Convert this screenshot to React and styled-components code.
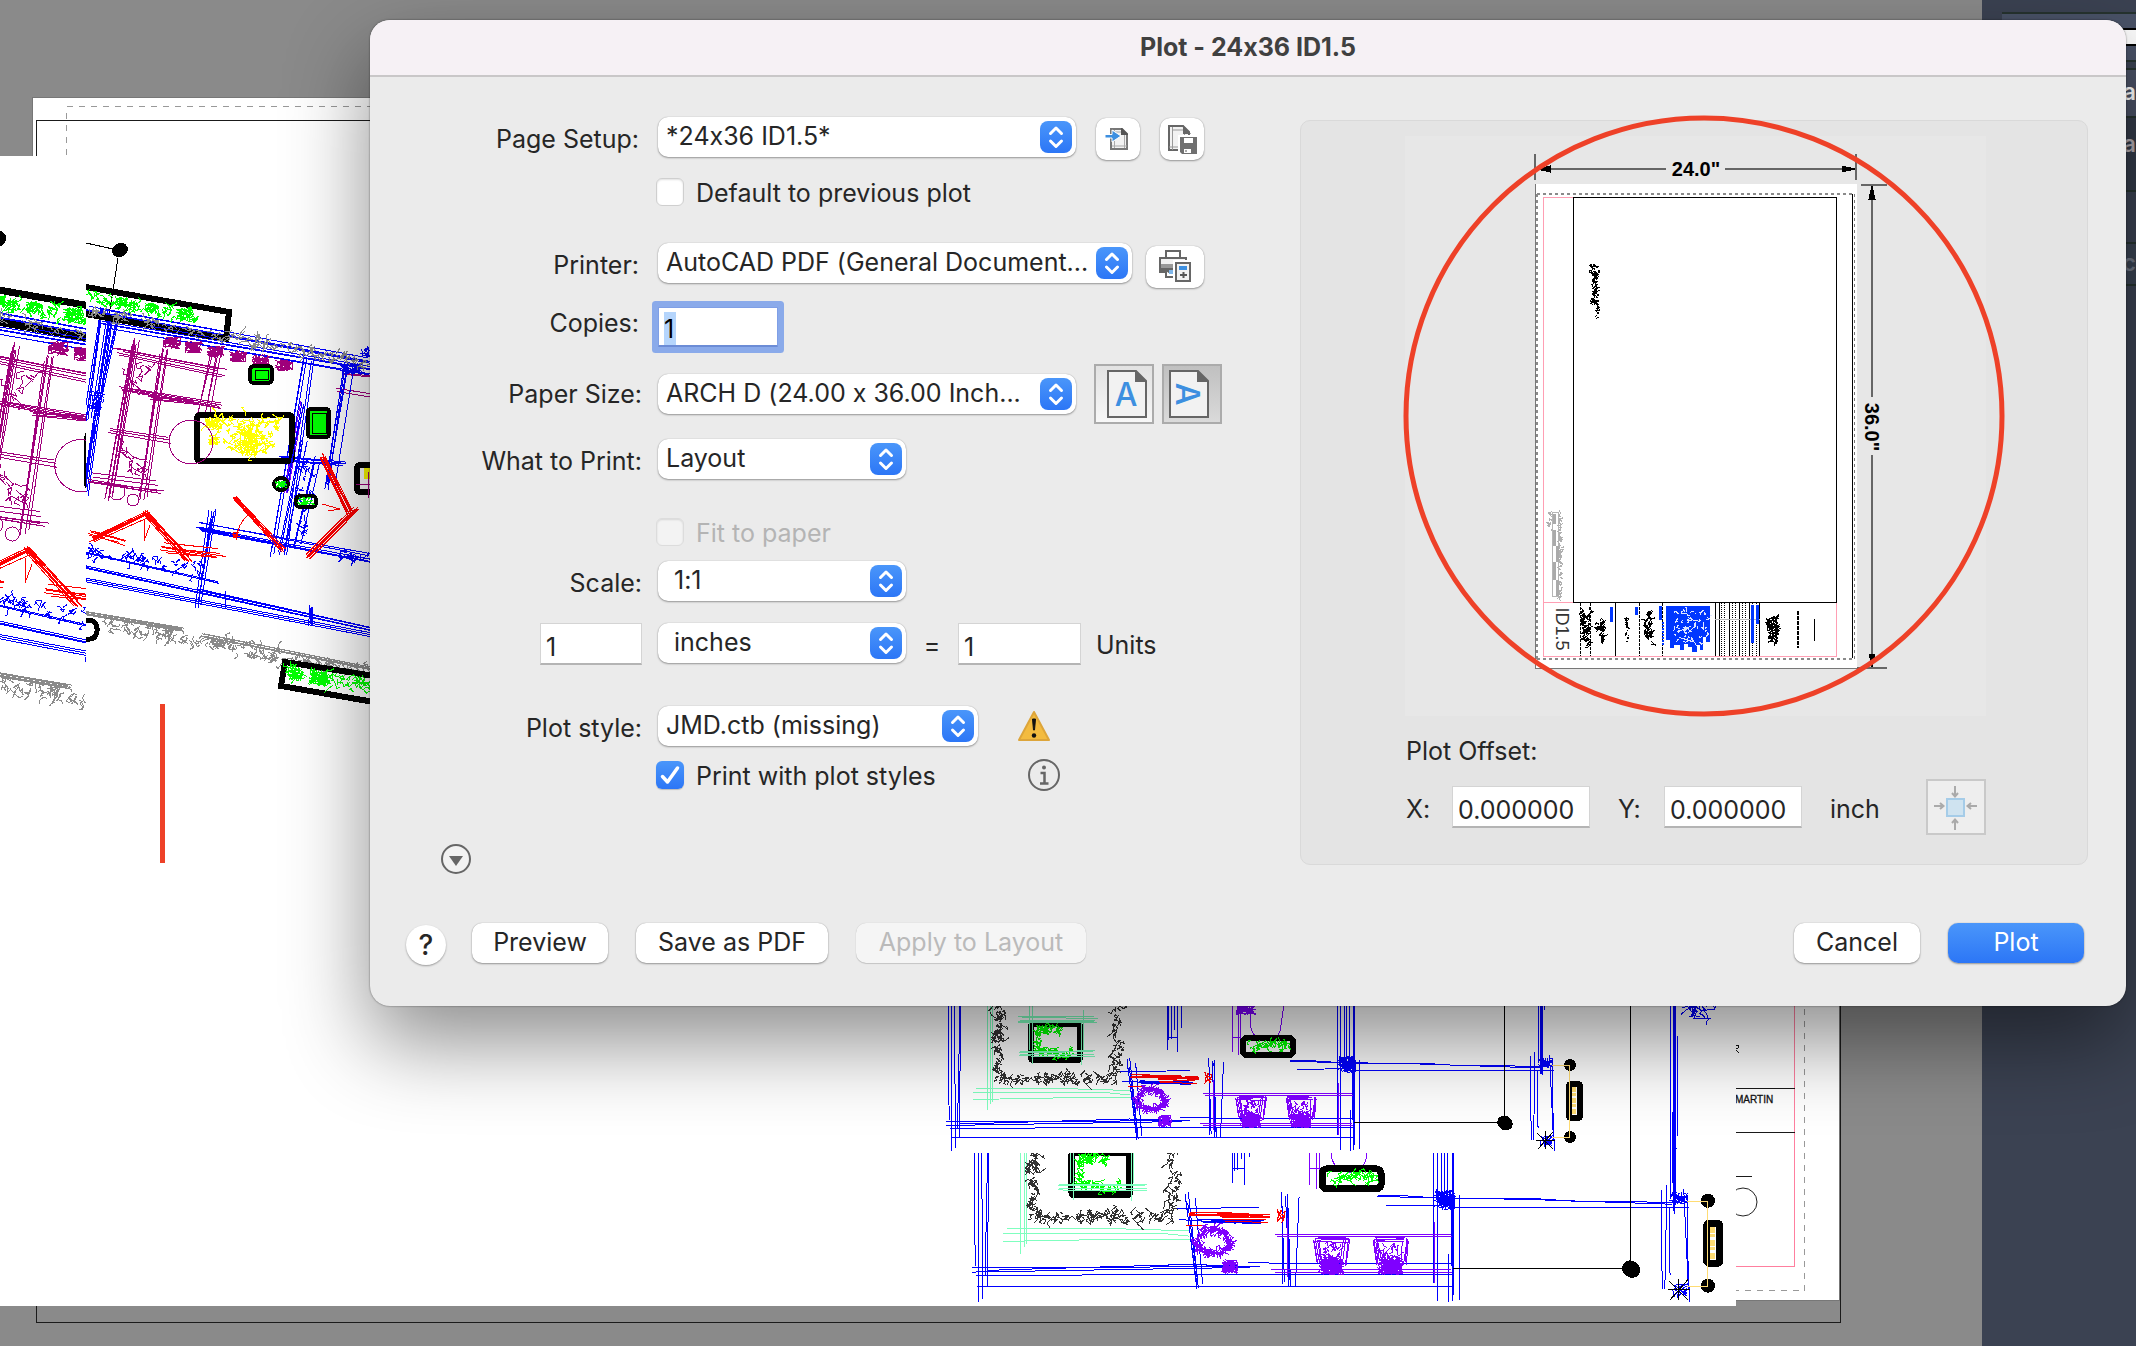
import React, { useState } from 'react';
import styled, { createGlobalStyle, css } from 'styled-components';

const GlobalStyle = createGlobalStyle`
  * { box-sizing: border-box; }
  body {
    margin: 0;
    background: #8a8a8a;
    color: #262626;
    font-family: Inter, "Liberation Sans", sans-serif;
    font-feature-settings: "calt" 0;
    font-size: 25px;
    line-height: 30px;
    overflow: hidden;
  }
  button, input, select { font: inherit; font-feature-settings: "calt" 0; color: inherit; }
`;

/* ---------- pen strokes for the floor plan ---------- */

let seed = 7;
const rnd = () => {
  seed = (seed * 16807) % 2147483647;
  return seed / 2147483647;
};
const spread = (n) => (rnd() - 0.5) * 2 * n;

// several nearly parallel strokes between two points
const bundle = (x1, y1, x2, y2, count, wobble) => {
  const len = Math.hypot(x2 - x1, y2 - y1) || 1;
  const nx = -(y2 - y1) / len;
  const ny = (x2 - x1) / len;
  const ux = (x2 - x1) / len;
  const uy = (y2 - y1) / len;
  let d = '';
  for (let i = 0; i < count; i++) {
    const a = spread(wobble);
    const b = a + spread(wobble * 0.4);
    const s = spread(wobble);
    const e = spread(wobble);
    d += `M${(x1 + nx * a + ux * s).toFixed(1)} ${(y1 + ny * a + uy * s).toFixed(1)}`;
    d += `L${(x2 + nx * b + ux * e).toFixed(1)} ${(y2 + ny * b + uy * e).toFixed(1)}`;
  }
  return d;
};

// short squiggles inside a band that runs from one point to the other
const squiggle = (x1, y1, x2, y2, depth, count, size) => {
  const upright = Math.abs(y2 - y1) > Math.abs(x2 - x1);
  let d = '';
  for (let i = 0; i < count; i++) {
    const t = rnd();
    const x = x1 + (x2 - x1) * t + spread(depth) * (upright ? 1 : 0.2);
    const y = y1 + (y2 - y1) * t + spread(depth) * (upright ? 0.2 : 1);
    d += `M${x.toFixed(1)} ${y.toFixed(1)}`;
    for (let k = 0; k < 3; k++) {
      d += `l${spread(size).toFixed(1)} ${spread(size).toFixed(1)}`;
    }
  }
  return d;
};

// dense knot of strokes
const knot = (cx, cy, rx, ry, count) => {
  let d = '';
  for (let i = 0; i < count; i++) {
    d += `M${(cx + spread(rx)).toFixed(1)} ${(cy + spread(ry)).toFixed(1)}`;
    d += `L${(cx + spread(rx)).toFixed(1)} ${(cy + spread(ry)).toFixed(1)}`;
  }
  return d;
};

const ring = (cx, cy, rx, ry, count, size = 4) => {
  let d = '';
  for (let i = 0; i < count; i++) {
    const a = rnd() * 6.283;
    d += `M${(cx + Math.cos(a) * rx).toFixed(1)} ${(cy + Math.sin(a) * ry).toFixed(1)}`;
    for (let k = 0; k < 3; k++) d += `l${spread(size).toFixed(1)} ${spread(size).toFixed(1)}`;
  }
  return d;
};

const BLUE = '#0000ff';
const PLUM = '#a0007c';
const VIOLET = '#7f00ff';
const AQUA = '#7fffbf';
const GREEN = '#00ff00';
const AMBER = '#ffdc73';

const strokes = [
  // upper room
  { c: BLUE, d: bundle(104, 310, 88, 420, 6, 4) + bundle(112, 318, 87, 495, 6, 4) + bundle(118, 320, 92, 440, 3, 2) + knot(97, 400, 8, 10, 20) },
  { c: BLUE, d: bundle(86, 308, 370, 360, 4, 3) + bundle(100, 322, 370, 368, 3, 2) + bundle(110, 328, 370, 374, 2, 2) },
  { c: PLUM, d: bundle(136, 342, 110, 498, 7, 5) + bundle(164, 352, 142, 500, 5, 4) + bundle(217, 352, 204, 412, 5, 6) },
  { c: PLUM, d: bundle(118, 350, 222, 371, 6, 5) + bundle(120, 388, 218, 405, 5, 4) + bundle(108, 430, 170, 440, 3, 3) + bundle(92, 478, 160, 488, 7, 5) },
  { c: PLUM, d: squiggle(148, 366, 130, 380, 8, 8, 7) + squiggle(128, 450, 136, 475, 6, 14, 7) + bundle(150, 398, 195, 402, 4, 3) },
  { c: PLUM, d: [172, 194, 216, 238, 261, 284].map((x, i) => knot(x, 343 + i * 4.4, 9, 6, 46)).join('') },
  { c: PLUM, d: bundle(336, 390, 372, 396, 2, 2) + bundle(344, 374, 372, 376, 2, 2) },
  { c: BLUE, d: bundle(307, 355, 274, 555, 3, 3) + bundle(313, 360, 286, 555, 2, 2) + bundle(349, 368, 330, 490, 6, 6) + bundle(304, 442, 282, 553, 4, 3) + bundle(317, 460, 298, 545, 3, 4) },
  { c: BLUE, d: knot(352, 369, 12, 6, 24) + knot(366, 352, 6, 6, 14) + bundle(282, 458, 344, 463, 5, 4) + squiggle(308, 460, 300, 540, 6, 26, 4) },
  { c: VIOLET, d: bundle(302, 402, 286, 494, 3, 2) },
  { c: BLUE, d: bundle(200, 527, 372, 560, 7, 5) + bundle(214, 516, 200, 604, 6, 7) + squiggle(330, 552, 368, 560, 3, 14, 5) },
  { c: BLUE, d: bundle(60, 561, 372, 629, 3, 2) + bundle(86, 552, 218, 582, 3, 2) + bundle(60, 576, 372, 635, 3, 3) + bundle(200, 590, 372, 628, 4, 3) },
  { c: BLUE, d: bundle(227, 592, 227, 608, 3, 2) + bundle(311, 607, 311, 624, 4, 2) + squiggle(88, 552, 205, 572, 5, 60, 4) },
  { c: '#ff0000', d: bundle(92, 540, 148, 514, 9, 3) + bundle(146, 512, 190, 560, 9, 4) + bundle(90, 533, 122, 542, 7, 5) + bundle(165, 548, 222, 556, 6, 6) + 'M144 520V541L150 525' },
  { c: '#ff0000', d: bundle(235, 498, 283, 550, 9, 2) + bundle(322, 456, 350, 514, 9, 3) + bundle(356, 508, 308, 556, 9, 3) + 'M248 515Q236 526 237 540M322 504L340 509L328 511' + knot(236, 535, 4, 3, 10) },
  { c: '#8a8a8a', d: bundle(86, 613, 182, 630, 7, 2) + bundle(203, 635, 372, 668, 7, 2) + knot(168, 632, 6, 7, 18) + knot(219, 643, 7, 6, 18) },
  { c: '#8a8a8a', d: squiggle(104, 624, 200, 642, 5, 60, 4) + squiggle(205, 640, 285, 658, 6, 60, 4) + squiggle(290, 660, 372, 672, 4, 60, 4) },
  // lower room
  { c: BLUE, d: 'M948.5 880V1090L949.5 1120M951.5 880V1151M954.5 880V1020L955.5 1148M959.5 880V1030L957.5 1128M961.5 880L959.5 1138' },
  { c: BLUE, d: 'M946 1121.5H1060L1180 1120.5M946 1125.5L1182 1121.5M950 1128.5L1120 1127.5H1353M951 1137.5H1353M960 1124L1130 1119L1190 1121M1180 1117.5L1240 1118.5H1353' },
  { c: AQUA, d: 'M987.5 880V1110M990.5 880V1104M992.5 880V1102M976 1088.5H1060L1130 1090.5M973 1092.5L1105 1092.5L1130 1095M973 1099.5L1080 1097.5H1132' },
  { c: '#333', d: squiggle(999, 990, 999, 1080, 4, 80, 4) + squiggle(1117, 990, 1117, 1080, 4, 60, 4) + squiggle(1000, 1079, 1118, 1079, 3, 90, 4) },
  { c: BLUE, d: 'M1167.5 880V1050M1168.5 880V1040M1171.5 880V1039M1174.5 880V1030M1177.5 880V1052M1181.5 880V1028M1167 1037.5H1177' },
  { c: VIOLET, d: 'M1232.5 990V1052M1238.5 990V1055M1240.5 990V1050M1232 1037.5H1240M1249.5 1000L1251 1028Q1254 1040 1266 1041Q1280 1040 1281 1025L1284.500 1000' + knot(1246, 1008, 10, 7, 50) },
  { c: BLUE, d: 'M1337.500 880V1135M1340.500 880V1150M1344.500 880V1070M1346.500 880V1070M1349.500 880V1070M1353.500 880V1150M1354.500 880V1145M1352.500 1060V1120M1359.500 1060V1149M1350 1110V1151' + knot(1347, 1064, 9, 9, 60) },
  { c: BLUE, d: 'M1290 1060.5H1308L1353 1063.500M1290 1061.500L1420 1064L1540 1068M1350 1063H1420L1458 1065.500H1500L1545 1067M1297 1069.500L1353 1068.500M1353 1070.500H1554' },
  { c: BLUE, d: bundle(1132, 1062, 1140, 1136, 5, 5) + bundle(1211, 1060, 1213, 1136, 5, 4) + 'M1223.500 1062L1220.500 1137M1120 1072L1190 1070.500M1122 1081L1170 1084' + bundle(1140, 1082, 1192, 1083, 4, 2) },
  { c: '#ff0000', d: bundle(1132, 1076, 1180, 1077, 7, 2) + bundle(1160, 1080, 1196, 1080, 8, 3) + knot(1208, 1078, 4, 6, 18) + 'M1128 1086H1142' },
  { c: VIOLET, d: ring(1151, 1100, 13, 10, 170, 3) + knot(1165, 1121, 7, 6, 60) + 'M1203 1093.500H1352M1205 1095.500H1353M1200 1123.500H1352M1203 1125.500H1353M1213.500 1080V1130M1338.500 1083V1135' },
  { c: VIOLET, d: [1251, 1301].map((x) => knot(x, 1121, 11, 7, 110) + bundle(x - 13, 1098, x - 10, 1118, 5, 3) + bundle(x + 13, 1098, x + 11, 1118, 5, 3) + bundle(x - 13, 1098, x + 13, 1098, 4, 2) + ring(x, 1109, 7, 5, 26, 3)).join('') },
  { c: BLUE, d: 'M1538.500 820V1060M1540.500 820V1074M1541.500 820V1074M1542.500 820V1060M1543 1020L1542 1076M1540 990V1050M1544 925V1010' + knot(1545, 1063, 8, 5, 30) },
  { c: BLUE, d: 'M1530.500 1056V1100L1531.500 1140M1534.500 1052V1090L1533.500 1140M1537.500 1070V1125L1538.500 1128M1549.500 1055L1553.500 1140M1552.500 1060V1100L1554.500 1151' + knot(1546, 1141, 7, 6, 16) + ring(1565, 897, 7, 9, 36, 6) + 'M1557 911H1573' },
];

const aquaFrame = 'M1029.5 880V1050M1032.5 900V1064M1083.5 1010V1050M1081.5 1020V1065' + bundle(1020, 1020, 1096, 1020, 5, 3) + bundle(1019, 1053, 1095, 1053, 5, 3);
const wallHatch = squiggle(90, 312, 228, 338, 4, 60, 4) + squiggle(228, 335, 370, 365, 3, 90, 4);
const planterFill = squiggle(90, 298, 196, 317, 5, 90, 4) + knot(122, 302, 6, 5, 24) + knot(150, 308, 6, 5, 24) + knot(184, 314, 9, 6, 30);
const planterFill2 = squiggle(286, 671, 372, 687, 6, 80, 4) + knot(318, 678, 10, 8, 44) + knot(295, 674, 8, 7, 30);
const shrub = knot(281, 484, 6, 4, 16) + knot(306, 501, 9, 4, 20);
const deskFill = squiggle(210, 424, 280, 424, 8, 60, 5) + squiggle(230, 444, 274, 444, 8, 50, 5) + knot(212, 423, 8, 6, 40) + knot(214, 440, 6, 5, 24) + knot(250, 440, 8, 16, 50);
const smallFill = knot(1043, 1030, 7, 5, 34) + squiggle(1038, 1028, 1064, 1028, 5, 16, 4) + squiggle(1038, 1053, 1074, 1053, 4, 34, 4) + squiggle(1038, 1032, 1038, 1054, 2, 20, 3);
const smallFill2 = squiggle(1247, 1045, 1289, 1045, 4, 54, 3);
const star = 'M1545 1131V1149M1537 1133L1553 1149M1553 1132L1538 1149M1536 1140H1555';

const Drawing = styled.svg`
  position: absolute;
  top: 0;
  left: 0;
  display: block;
  shape-rendering: crispEdges;
`;

function FloorPlan() {
  return (
    <g fill="none">
      <path d="M86 243L113 249M118 258L108 322" stroke="#000" vectorEffect="non-scaling-stroke" />
      <ellipse cx="120" cy="250" rx="8" ry="7" transform="rotate(-30 120 250)" fill="#000" />
      {strokes.map((s, i) => (
        <path key={i} d={s.d} stroke={s.c} vectorEffect="non-scaling-stroke" />
      ))}
      <path d="M80 286L229 312L226 339L80 313" stroke="#000" strokeWidth="6" />
      <path d="M90 311L180 327M100 309L226 332M150 326L220 339" stroke={BLUE} vectorEffect="non-scaling-stroke" />
      <path d={wallHatch} stroke="#8a8a8a" vectorEffect="non-scaling-stroke" />
      <path d={planterFill} stroke={GREEN} />
      <rect x="197" y="415" width="95" height="46" rx="3" stroke="#000" strokeWidth="6" />
      <path d={deskFill} stroke="#ffff00" vectorEffect="non-scaling-stroke" />
      <circle cx="191" cy="442" r="22" stroke={PLUM} vectorEffect="non-scaling-stroke" />
      <circle cx="117" cy="492" r="8" stroke={PLUM} vectorEffect="non-scaling-stroke" />
      <circle cx="133" cy="500" r="6" stroke={PLUM} vectorEffect="non-scaling-stroke" />
      <path d="M302 402L287 492M304 404L285 490" stroke={BLUE} />
      <rect x="250" y="366" width="22" height="17" rx="4" fill={GREEN} stroke="#000" strokeWidth="4" />
      <rect x="255" y="370" width="13" height="9" stroke="#000" />
      <rect x="308" y="409" width="21" height="28" rx="3" fill={GREEN} stroke="#000" strokeWidth="4" />
      <rect x="312" y="413" width="14" height="20" stroke="#000" />
      <ellipse cx="281" cy="484" rx="7" ry="6" stroke="#000" strokeWidth="4" />
      <rect x="296" y="496" width="20" height="11" rx="4" stroke="#000" strokeWidth="4" />
      <path d={shrub} stroke={GREEN} />
      <rect x="357" y="465" width="40" height="27" rx="3" fill="#fff" stroke="#000" strokeWidth="6" />
      <rect x="364" y="468" width="20" height="11" fill="#ffff00" />
      <path d="M356 484H372M368 472V498" stroke={PLUM} />
      <path d="M84 620H90Q98 622 97 631Q96 639 90 639H84" stroke="#000" strokeWidth="5" />
      <path d="M374 676L285 662L281 686L374 702" stroke="#000" strokeWidth="6" />
      <path d={planterFill2} stroke={GREEN} />

      <rect x="1031" y="1024" width="49" height="36" rx="2" stroke="#000" strokeWidth="6" />
      <path d={smallFill} stroke={GREEN} vectorEffect="non-scaling-stroke" />
      <path d={aquaFrame} stroke={AQUA} vectorEffect="non-scaling-stroke" />
      <rect x="1243" y="1038" width="50" height="17" rx="4" stroke="#000" strokeWidth="6" />
      <path d={smallFill2} stroke={GREEN} vectorEffect="non-scaling-stroke" />
      <path d="M1354 1122.500H1500M1504.500 820V1118" stroke="#000" vectorEffect="non-scaling-stroke" />
      <ellipse cx="1505" cy="1123" rx="8" ry="7" transform="rotate(35 1505 1123)" fill="#000" />
      <path d={star} stroke="#000" vectorEffect="non-scaling-stroke" />
      <circle cx="1570" cy="1065" r="6" fill="#000" />
      <circle cx="1570" cy="1137" r="6" fill="#000" />
      <rect x="1566" y="1081" width="17" height="40" rx="5" fill="#000" />
      <path d="M1574 1087V1115" stroke="#fff" strokeWidth="5" />
      <path d="M1574 1087V1115" stroke={AMBER} strokeWidth="4" strokeDasharray="5 1 3 2" />
      <path d="M1552 1065.500H1569.500V1137.500H1552" stroke={AMBER} vectorEffect="non-scaling-stroke" />
    </g>
  );
}

function Sheet() {
  return (
    <Drawing width="1982" height="1346" viewBox="0 0 1982 1346" aria-hidden="true">
      <defs>
        <clipPath id="patchBack"><rect x="0" y="156" width="1736" height="1150" /></clipPath>
        <clipPath id="patchFront"><rect x="86" y="180" width="1508" height="973" /></clipPath>
      </defs>
      <rect x="32" y="97" width="1807" height="1203" fill="#fff" stroke="#777" />
      <rect x="66.500" y="106.500" width="1738" height="1184" fill="none" stroke="#999" strokeDasharray="6 6" />
      <rect x="36.500" y="120.500" width="1804" height="1202" fill="none" stroke="#1a1a1a" />
      <path d="M1700 1266.500H1794.500V900" fill="none" stroke="#ff7f9f" />
      <path d="M1700 1088.500H1795M1700 1132.500H1795M1700 1176.500H1752" stroke="#1a1a1a" />
      <circle cx="1743" cy="1202" r="14" fill="none" stroke="#222" shapeRendering="auto" />
      <text x="1735" y="1103" fontSize="10" fontFamily="Liberation Sans, sans-serif" fill="#111" stroke="#111" strokeWidth="0.300">MARTIN</text>
      <path d="M1734 1045H1738V1048L1735 1049L1739 1053" fill="none" stroke="#111" />
      <g clipPath="url(#patchBack)">
        <rect x="0" y="156" width="1736" height="1150" fill="#fff" />
        <g transform="translate(-144.700 -56) scale(1.18)"><FloorPlan /></g>
      </g>
      <g clipPath="url(#patchFront)">
        <rect x="86" y="180" width="1508" height="973" fill="#fff" />
        <FloorPlan />
      </g>
      <rect x="160" y="704" width="5" height="159" fill="#ee4128" />
    </Drawing>
  );
}

/* ---------- palette behind the dialog ---------- */

const Stage = styled.div`
  position: relative;
  min-height: 100vh;
  display: grid;
  grid-template-columns: minmax(0, 1fr) 154px;
  overflow: hidden;
`;

const Palette = styled.aside`
  grid-column: 2;
  grid-row: 1;
  min-height: 100vh;
  background: #3b4252;
  padding-top: 12px;
  padding-left: 20px;
  font-size: 23px;
  font-weight: 600;
  text-align: right;
  overflow: hidden;
`;

const PaletteLine = styled.div`
  height: ${(p) => p.$height}px;
  padding-top: ${(p) => p.$pad || 0}px;
  background: ${(p) => p.$bg || 'transparent'};
  border-top: 2px solid #26332f;
  color: ${(p) => p.$color || '#fff'};
  line-height: 30px;
`;

const PaletteSwatch = styled.div`
  height: 18px;
  margin: 14px 0 16px;
  border: 2px solid #000;
  border-right: 0;
  background: #fff;
`;

/* ---------- dialog ---------- */

const Dialog = styled.section`
  grid-column: 1 / -1;
  grid-row: 1;
  position: relative;
  align-self: start;
  margin: 20px 10px 0 370px;
  border-radius: 20px;
  background: #ebebeb;
  box-shadow: 0 0 2px rgba(0, 0, 0, 0.55), 0 36px 84px rgba(0, 0, 0, 0.45);
`;

const TitleBar = styled.h1`
  margin: 0;
  height: 57px;
  padding-top: 12px;
  border-radius: 20px 20px 0 0;
  border-bottom: 2px solid #c9c7c8;
  background: #f6f1f5;
  font-size: 25px;
  font-weight: 700;
  line-height: 30px;
  text-align: center;
  color: #404040;
`;

const Body = styled.div`
  display: flex;
  align-items: flex-start;
  padding: 40px 38px 0 0;
`;

const Form = styled.form`
  width: 930px;
  flex: none;
`;

const Row = styled.div`
  display: grid;
  grid-template-columns: 272px minmax(0, 1fr);
  column-gap: 16px;
  min-height: ${(p) => p.$height || 44}px;
  margin-top: ${(p) => p.$top || 0}px;
  align-items: ${(p) => (p.$center ? 'center' : 'start')};
`;

const Controls = styled.div`
  grid-column: 2;
  display: flex;
  align-items: ${(p) => (p.$center ? 'center' : 'flex-start')};
`;

const Label = styled.label`
  justify-self: end;
  line-height: 44px;
  padding-right: ${(p) => (p.$inset ? 3 : 0)}px;
  white-space: nowrap;
`;

const SelectWrap = styled.span`
  position: relative;
  display: block;
  flex: none;
  width: ${(p) => p.$width}px;
  height: 40px;
`;

const StyledSelect = styled.select`
  appearance: none;
  width: 100%;
  height: 40px;
  padding: 0 40px 2px ${(p) => (p.$indent ? 16 : 8)}px;
  border: 0;
  border-radius: 10px;
  background: #fff;
  box-shadow: 0 1px 2px rgba(0, 0, 0, 0.35), 0 0 1px rgba(0, 0, 0, 0.3);
  outline: none;
`;

const Knob = styled.svg`
  position: absolute;
  top: 4px;
  right: 4px;
  width: 32px;
  height: 32px;
  border-radius: 8px;
  background: linear-gradient(#4a96fa, #2c76f6);
  pointer-events: none;
`;

function Select({ id, width, value, indent, label }) {
  return (
    <SelectWrap $width={width}>
      <StyledSelect id={id} defaultValue={value} $indent={indent} aria-label={label}>
        <option>{value}</option>
      </StyledSelect>
      <Knob viewBox="0 0 32 32" fill="none" stroke="#fff" strokeWidth="3" strokeLinecap="round" strokeLinejoin="round">
        <path d="M10.500 12.500L16 7L21.500 12.500M10.500 20L16 25.500L21.500 20" />
      </Knob>
    </SelectWrap>
  );
}

const TextInput = styled.input`
  width: ${(p) => p.$width}px;
  height: 42px;
  padding: 6px 6px 0 5px;
  border: 1px solid #d4d4d4;
  border-bottom: 2px solid #b4b4b4;
  border-radius: 0;
  background: #fff;
  outline: none;
  ${(p) => p.$focused && css`
    height: 40px;
    padding: 5px 5px 0;
    margin: 6px 0;
    border: 1px solid #7f9fe6;
    border-bottom: 2px solid #6c8cd6;
    color: #000;
    background: linear-gradient(#b5d5fc, #b5d5fc) no-repeat 5px 4px / 12px 33px #fff;
    box-shadow: 0 0 0 6px #8aaaea;
    border-radius: 1px;
  `}
`;

const CheckLabel = styled.label`
  display: flex;
  align-items: center;
  gap: 12px;
  height: 28px;
  margin-left: -2px;
  color: ${(p) => (p.$off ? '#b4b4b4' : 'inherit')};
  white-space: nowrap;
`;

const CheckText = styled.span`
  padding-top: 2px;
`;

const CheckBox = styled.input`
  appearance: none;
  flex: none;
  width: 28px;
  height: 28px;
  margin: 0;
  border-radius: 6px;
  border: 1px solid #cfcfcf;
  background: #fff;
  box-shadow: inset 0 1px 2px rgba(0, 0, 0, 0.12);
  &:disabled { background: #f3f3f3; border-color: #dcdcdc; }
  &:checked {
    border: 0;
    background: linear-gradient(#4a96fa, #2c76f6);
    box-shadow: 0 1px 1px rgba(0, 0, 0, 0.2);
  }
`;

const CheckHolder = styled.span`
  position: relative;
  display: flex;
  svg { position: absolute; inset: 0; pointer-events: none; }
`;

function Check({ text, defaultChecked, disabled }) {
  const [on, setOn] = useState(!!defaultChecked);
  return (
    <CheckLabel $off={disabled}>
      <CheckHolder>
        <CheckBox type="checkbox" checked={on} disabled={disabled} onChange={() => setOn(!on)} />
        {on && (
          <svg width="28" height="28" viewBox="0 0 28 28" fill="none" stroke="#fff" strokeWidth="3.500" strokeLinecap="round" strokeLinejoin="round">
            <path d="M6.500 15.500L11.500 21L21.500 7" />
          </svg>
        )}
      </CheckHolder>
      <CheckText>{text}</CheckText>
    </CheckLabel>
  );
}

const IconButton = styled.button`
  display: grid;
  place-items: center;
  flex: none;
  width: ${(p) => p.$width || 44}px;
  height: 42px;
  margin-top: ${(p) => p.$top || 1}px;
  margin-left: ${(p) => p.$left}px;
  padding: 0;
  border: 0;
  border-radius: 10px;
  background: #fff;
  box-shadow: 0 1px 2px rgba(0, 0, 0, 0.35), 0 0 1px rgba(0, 0, 0, 0.3);
`;

const SquareButton = styled.button`
  display: grid;
  place-items: center;
  flex: none;
  width: 60px;
  height: ${(p) => p.$height || 60}px;
  margin-left: ${(p) => p.$left || 'auto'};
  padding: 0;
  border: 2px solid ${(p) => (p.$faded ? '#c9c9c9' : '#ababab')};
  background: ${(p) => (p.$faded ? '#eee' : p.$pressed ? 'linear-gradient(#c0c0c0, #dadada)' : 'linear-gradient(#e2e2e2, #f7f7f7)')};
`;

const PlainButton = styled.button`
  display: grid;
  place-items: center;
  width: 32px;
  height: 32px;
  padding: 0;
  border: 0;
  background: none;
`;

const Equals = styled.span`
  width: 52px;
  line-height: 44px;
  text-align: center;
`;

const Units = styled.span`
  margin-left: 15px;
  line-height: 44px;
`;

const WarnSlot = styled.span`
  display: flex;
  margin: 4px 0 0 40px;
`;

const InfoSlot = styled.span`
  display: flex;
  margin: -2px 0 -2px 92px;
`;

const Disclosure = styled.div`
  margin: 54px 0 0 70px;
  height: 32px;
`;

const Panel = styled.div`
  flex: 1;
  min-width: 0;
  margin-top: 3px;
  padding: 15px 0 29px;
  border: 1px solid #d9d9d9;
  border-radius: 10px;
  background: #e4e4e4;
`;

const PanelInner = styled.div`
  width: 584px;
  margin: 0 auto;
  padding-left: 3px;
`;

const Preview = styled.svg`
  display: block;
  width: 581px;
  height: 580px;
  overflow: visible;
`;

const OffsetTitle = styled.div`
  margin: 20px 0 13px 1px;
`;

const OffsetRow = styled.div`
  display: flex;
  align-items: center;
  padding-left: 1px;
`;

const OffsetLabel = styled.label`
  width: 46px;
  padding-top: 3px;
`;

const OffsetField = styled.span`
  display: flex;
  align-items: center;
  margin-right: 28px;
`;

const Unit = styled.span`
  padding-top: 3px;
`;

const Footer = styled.footer`
  display: flex;
  align-items: flex-start;
  gap: 28px;
  margin-top: 48px;
  padding: 0 42px 41px 36px;
`;

const HelpButton = styled.button`
  width: 40px;
  height: 40px;
  margin: 2px -2px 0 0;
  padding: 0;
  border: 0;
  border-radius: 50%;
  background: #fff;
  box-shadow: 0 1px 2px rgba(0, 0, 0, 0.35);
  font-size: 28px;
  font-weight: 500;
`;

const PushButton = styled.button`
  width: ${(p) => p.$width}px;
  height: 40px;
  padding: 0 0 2px;
  border: 0;
  border-radius: 10px;
  background: #fff;
  box-shadow: 0 1px 2px rgba(0, 0, 0, 0.35), 0 0 1px rgba(0, 0, 0, 0.3);
  white-space: nowrap;
  &:disabled { color: #bababa; background: #f5f5f5; box-shadow: 0 1px 1px rgba(0, 0, 0, 0.15), 0 0 1px rgba(0, 0, 0, 0.2); }
  ${(p) => p.$primary && css`
    color: #fff;
    background: linear-gradient(#4a96fa, #2c76f6);
  `}
`;

const Spacer = styled.span`
  flex: 1;
`;

/* ---------- icons ---------- */

const ImportIcon = () => (
  <svg width="44" height="42" viewBox="0 0 44 42">
    <path d="M15 11H26L31 16V31H15Z" fill="#f2f2f2" stroke="#777" strokeWidth="2" />
    <path d="M18.500 12V30M28.500 16V30M16 28H31M18 14H26" stroke="#aaa" strokeWidth="1" />
    <path d="M25 10H26L32 16V17H25Z" fill="#555" />
    <path d="M9 16.500H16V12L25 18L16 24V20H9Z" fill="#3d8fe0" stroke="#fff" strokeWidth="1" />
  </svg>
);

const SaveIcon = () => (
  <svg width="44" height="42" viewBox="0 0 44 42">
    <path d="M9 8H23L29 14V32H9Z" fill="#f2f2f2" stroke="#666" strokeWidth="2" />
    <path d="M12.500 9V32M9 29H20M12 12H23M24.500 15V18" stroke="#999" strokeWidth="1" />
    <path d="M23 7L31 16H23Z" fill="#666" />
    <path d="M18 17H40V38H18Z" fill="#fff" />
    <path d="M20 19H37V36H22L20 34Z" fill="#707070" />
    <path d="M24 20H33V25H24ZM24 31H31V35H24Z" fill="#fff" />
    <path d="M26 32V34" stroke="#555" />
  </svg>
);

const PrinterIcon = () => (
  <svg width="58" height="42" viewBox="0 0 58 42">
    <path d="M14 12H40V26H14Z" fill="#f2f2f2" stroke="#666" strokeWidth="2" />
    <path d="M20 5H34V12H20Z" fill="#fff" stroke="#666" strokeWidth="2" />
    <path d="M15 18H29V22H15Z" fill="#999" />
    <path d="M13 22H29V26H13Z" fill="#666" />
    <path d="M20 25V31H28" fill="#fff" stroke="#666" strokeWidth="2" />
    <path d="M23 24H28V28H23Z" fill="#7fb6ea" />
    <path d="M27 14H48V40H27Z" fill="#fff" />
    <path d="M30 17H44V35H30Z" fill="#f2f2f2" stroke="#666" strokeWidth="2" />
    <path d="M33 20H41V24H33Z" fill="#3d8fe0" />
    <path d="M34 29H41M37.500 26V32" stroke="#555" strokeWidth="2" />
  </svg>
);

const PageIcon = ({ turned }) => (
  <svg width="56" height="56" viewBox="0 0 56 56">
    <g transform={turned ? 'translate(-6 0)' : undefined}>
      <path d="M12 5H40L50 15V51H12Z" fill="#f2f2f2" stroke="#666" strokeWidth="2" />
      <path d="M39 4L51 16H39Z" fill="#666" />
      <text
        x="30"
        y="40"
        fontSize="32"
        fontWeight="500"
        fontFamily="Inter, sans-serif"
        textAnchor="middle"
        fill="#3d8fe0"
        transform={turned ? 'rotate(90 30 28)' : undefined}
      >
        A
      </text>
    </g>
  </svg>
);

const WarnIcon = () => (
  <svg width="32" height="32" viewBox="0 0 32 32">
    <path d="M16 2L31 30H1Z" fill="#f3bb3f" stroke="#dda53a" strokeWidth="2" strokeLinejoin="round" />
    <path d="M14.500 9H17.500L16.500 20H15.500Z" fill="#111" stroke="#111" strokeLinejoin="round" />
    <circle cx="16" cy="25.500" r="2.200" fill="#111" />
  </svg>
);

const InfoIcon = () => (
  <svg width="32" height="32" viewBox="0 0 32 32" fill="none" stroke="#666" strokeWidth="2">
    <circle cx="16" cy="16" r="15" />
    <circle cx="16" cy="8.500" r="2" fill="#666" stroke="none" />
    <path d="M12.500 14H16.500V24.500M12 24.500H20.500" strokeWidth="2.500" />
  </svg>
);

const DownIcon = () => (
  <svg width="32" height="32" viewBox="0 0 32 32">
    <circle cx="16" cy="16" r="14" fill="#f2f2f2" stroke="#666" strokeWidth="2" />
    <path d="M9 13H23L16 23Z" fill="#666" />
  </svg>
);

const CenterIcon = () => (
  <svg width="56" height="52" viewBox="0 0 56 52" fill="none" stroke="#aaa" strokeWidth="2">
    <rect x="19" y="18" width="17" height="17" fill="#cfe3f0" stroke="#a5cce8" />
    <path d="M27 5V15M24 12L27 15.500L30 12M27 49V39M24 42L27 38.500L30 42" />
    <path d="M6 25H15M12 22L15.500 25L12 28M49 25H40M43 22L39.500 25L43 28" />
  </svg>
);

/* ---------- plot preview ---------- */

const noteFill = ring(1595, 270, 3, 3, 16, 2) + squiggle(1595, 274, 1595, 304, 2, 60, 2) + squiggle(1597, 300, 1597, 320, 1, 16, 1);
const greyFill = squiggle(1550, 512, 1550, 530, 1, 14, 2) + squiggle(1560, 512, 1560, 598, 1, 70, 2);
const textFill = squiggle(1583, 608, 1586, 640, 2, 60, 2) + squiggle(1589, 610, 1589, 648, 1, 30, 2)
  + squiggle(1602, 619, 1603, 642, 1, 36, 2) + squiggle(1598, 624, 1598, 632, 1, 8, 2) + squiggle(1627, 618, 1627, 642, 1, 26, 1)
  + squiggle(1650, 611, 1651, 648, 1, 30, 2) + squiggle(1646, 620, 1647, 638, 1, 24, 2)
  + squiggle(1770, 618, 1772, 641, 2, 70, 2) + squiggle(1776, 616, 1776, 644, 1, 50, 2);
const stampHoles = knot(1690, 634, 20, 14, 6) + squiggle(1672, 626, 1708, 626, 17, 50, 2);

function PlotPreview() {
  return (
    <Preview viewBox="1405 136 581 580" shapeRendering="crispEdges" fill="none" role="img" aria-label="Plot preview">
      <rect x="1405" y="136" width="581" height="580" fill="#e7e7e7" />
      <rect x="1535" y="184" width="322" height="484" fill="#fff" />
      <path d="M1535.500 184V668.500H1857" stroke="#777" />
      <path d="M1537 194H1855M1537 194V659M1537 659H1855" stroke="#8a8a8a" strokeWidth="2" strokeDasharray="3 3" />
      <path d="M1854.500 194V659" stroke="#777" strokeDasharray="3 3" />
      <path d="M1852.500 194V658" stroke="#000" />
      <path d="M1543.500 197.500H1836.500V656.500H1543.500ZM1543 602.500H1574" stroke="#ff9fb4" />
      <rect x="1573.500" y="197.500" width="263" height="405" stroke="#000" />
      <path d={noteFill} stroke="#000" />
      <path d={greyFill} stroke="#b0b0b0" />
      <path d="M1552.500 512V596H1558.500V512Z" stroke="#b5b5b5" />
      <path d="M1554 530V546M1557 546V562M1554 562V580M1557 580V596M1554 514V524" stroke="#aaa" strokeWidth="3" />
      <path d="M1580.500 603V656M1590.500 603V656M1639.500 603V656M1662.500 603V656" stroke="#000" strokeDasharray="3 1" />
      <path d="M1615.500 603V656M1715.500 603V656M1719.500 603V656M1729.500 603V656M1739.500 603V656M1749.500 603V656M1759.500 603V656" stroke="#000" />
      <path d="M1721.500 603V656M1724.500 603V656M1732.500 603V656M1735.500 603V656M1742.500 603V656M1745.500 603V656M1752.500 603V656M1756.500 603V656" stroke="#000" strokeDasharray="1 1" />
      <path d="M1715 619.500H1760" stroke="#bbb" />
      <path d={textFill} stroke="#000" />
      <path d="M1797.500 611V648" stroke="#000" strokeWidth="2" strokeDasharray="4 1" />
      <path d="M1814.500 619V641" stroke="#000" />
      <path d="M1666 606H1710V642H1706V637H1703V650H1700V645H1697V652H1692V647H1688V644H1684V650H1680V645H1674V648H1670V640H1666Z" fill="#0037ff" />
      <path d={stampHoles} stroke="#dfe6ff" strokeWidth="1" />
      <path d="M1611.500 607V622M1636.500 607V615M1660 606V620M1752.500 605V643M1757 605V624" stroke="#0037ff" strokeWidth="3" />
      <path d="M1663 622V645" stroke="#0037ff" strokeWidth="2" strokeDasharray="2 1" />

      <path d="M1535 154V180M1856 154V180M1537 169H1666M1725 169H1855" stroke="#666" strokeWidth="2" />
      <path d="M1861 185H1887M1857 668H1887M1872 187V397M1872 455V667" stroke="#666" strokeWidth="2" />
      <path d="M1537 169L1550 166V172ZM1855 169L1842 166V172ZM1872 186L1869 199H1875ZM1872 667L1869 654H1875Z" fill="#000" stroke="#000" />
      <g fill="#000" fontFamily="Liberation Sans, sans-serif" textAnchor="middle">
        <text x="1696" y="176" fontSize="20" fontWeight="700">24.0"</text>
        <text x="1872" y="427" fontSize="20" fontWeight="700" transform="rotate(90 1872 427) translate(0 7)">36.0"</text>
        <text x="1562" y="629" fontSize="18" fill="#333" transform="rotate(90 1562 629) translate(0 6)">ID1.5</text>
      </g>
      <circle cx="1704" cy="416" r="298" stroke="#ee4128" strokeWidth="5" shapeRendering="auto" />
    </Preview>
  );
}

function App() {
  return (
    <>
      <GlobalStyle />
      <Stage>
        <Sheet />
        <Palette>
          <PaletteLine $height={48} $bg="#4a5368"><PaletteSwatch /></PaletteLine>
          <PaletteLine $height={8} />
          <PaletteLine $height={48} $pad={7} $bg="#4a5165">a</PaletteLine>
          <PaletteLine $height={74} $pad={11} $color="#b5adb2" $bg="#343b49">a</PaletteLine>
          <PaletteLine $height={52} />
          <PaletteLine $height={42} $pad={4} $color="#6f7684" $bg="#3a4352">c</PaletteLine>
          <PaletteLine $height={900} />
        </Palette>
        <Dialog role="dialog" aria-labelledby="plot-title">
          <TitleBar id="plot-title">Plot - 24x36 ID1.5</TitleBar>
          <Body>
            <Form>
              <Row>
                <Label htmlFor="setup" $inset>Page Setup:</Label>
                <Controls>
                  <Select id="setup" width={418} value="*24x36 ID1.5*" />
                  <IconButton type="button" $left={20} aria-label="Import page setup"><ImportIcon /></IconButton>
                  <IconButton type="button" $left={20} aria-label="Save page setup"><SaveIcon /></IconButton>
                </Controls>
              </Row>
              <Row $height={28} $top={17}>
                <Controls><Check text="Default to previous plot" /></Controls>
              </Row>
              <Row $top={37}>
                <Label htmlFor="printer" $inset>Printer:</Label>
                <Controls>
                  <Select id="printer" width={474} value="AutoCAD PDF (General Document..." />
                  <IconButton type="button" $left={14} $width={58} $top={3} aria-label="Printer settings"><PrinterIcon /></IconButton>
                </Controls>
              </Row>
              <Row $height={52} $top={13}>
                <Label htmlFor="copies" $inset>Copies:</Label>
                <Controls><TextInput id="copies" $width={120} $focused defaultValue="1" /></Controls>
              </Row>
              <Row $height={60} $top={11} $center>
                <Label htmlFor="paper">Paper Size:</Label>
                <Controls $center>
                  <Select id="paper" width={418} value="ARCH D (24.00 x 36.00 Inch..." />
                  <SquareButton type="button" $left="18px" aria-label="Portrait"><PageIcon /></SquareButton>
                  <SquareButton type="button" $left="8px" $pressed aria-label="Landscape"><PageIcon turned /></SquareButton>
                </Controls>
              </Row>
              <Row $top={15}>
                <Label htmlFor="what">What to Print:</Label>
                <Controls><Select id="what" width={248} value="Layout" /></Controls>
              </Row>
              <Row $height={28} $top={35}>
                <Controls><Check text="Fit to paper" disabled /></Controls>
              </Row>
              <Row $top={15}>
                <Label htmlFor="scale">Scale:</Label>
                <Controls><Select id="scale" width={248} value="1:1" indent /></Controls>
              </Row>
              <Row $top={18}>
                <Label as="div"><TextInput $width={102} defaultValue="1" aria-label="Paper units" /></Label>
                <Controls>
                  <Select width={248} value="inches" indent label="Unit" />
                  <Equals>=</Equals>
                  <TextInput id="units" $width={123} defaultValue="1" aria-label="Drawing units" />
                  <Units>Units</Units>
                </Controls>
              </Row>
              <Row $top={37}>
                <Label htmlFor="style">Plot style:</Label>
                <Controls>
                  <Select id="style" width={320} value="JMD.ctb (missing)" />
                  <WarnSlot><WarnIcon /></WarnSlot>
                </Controls>
              </Row>
              <Row $height={28} $top={11}>
                <Controls>
                  <Check text="Print with plot styles" defaultChecked />
                  <InfoSlot><PlainButton type="button" aria-label="Info"><InfoIcon /></PlainButton></InfoSlot>
                </Controls>
              </Row>
              <Disclosure><PlainButton type="button" aria-label="Show more"><DownIcon /></PlainButton></Disclosure>
            </Form>
            <Panel>
              <PanelInner>
                <PlotPreview />
                <OffsetTitle>Plot Offset:</OffsetTitle>
                <OffsetRow>
                  <OffsetField>
                    <OffsetLabel htmlFor="off-x">X:</OffsetLabel>
                    <TextInput id="off-x" $width={138} defaultValue="0.000000" />
                  </OffsetField>
                  <OffsetField>
                    <OffsetLabel htmlFor="off-y">Y:</OffsetLabel>
                    <TextInput id="off-y" $width={138} defaultValue="0.000000" />
                  </OffsetField>
                  <Unit>inch</Unit>
                  <SquareButton type="button" $height={56} $faded disabled aria-label="Center the plot"><CenterIcon /></SquareButton>
                </OffsetRow>
              </PanelInner>
            </Panel>
          </Body>
          <Footer>
            <HelpButton type="button">?</HelpButton>
            <PushButton type="button" $width={136}>Preview</PushButton>
            <PushButton type="button" $width={192}>Save as PDF</PushButton>
            <PushButton type="button" $width={230} disabled>Apply to Layout</PushButton>
            <Spacer />
            <PushButton type="button" $width={126}>Cancel</PushButton>
            <PushButton type="button" $width={136} $primary>Plot</PushButton>
          </Footer>
        </Dialog>
      </Stage>
    </>
  );
}

export default App;
